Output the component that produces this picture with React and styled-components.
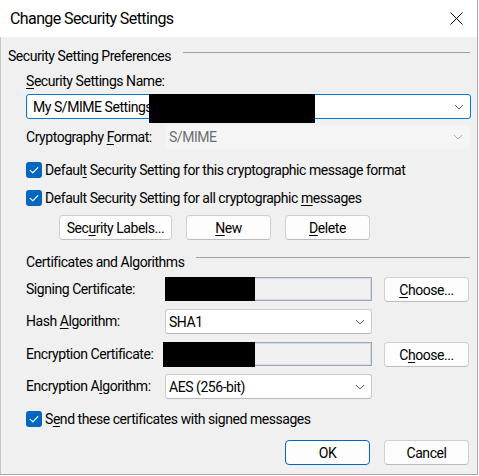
import React from 'react';
import styled, { createGlobalStyle } from 'styled-components';

const GlobalStyle = createGlobalStyle`
  html, body { margin: 0; padding: 0; background: #ffffff; }
  body { font-family: Roboto, "Noto Sans", sans-serif; font-size: 14px; letter-spacing: -0.45px; color: #000; }
  * { box-sizing: border-box; }
`;

const Window = styled.div`
  width: 478px;
  height: 475px;
  display: flex;
  flex-direction: column;
  background: #f0f0f0;
  border-right: 1px solid #a8a8a8;
  border-bottom: 1px solid #a8a8a8;
`;

const TitleBar = styled.div`
  height: 37px;
  flex: none;
  background: #ffffff;
  display: flex;
  align-items: center;
  justify-content: space-between;
  padding: 0 14px 0 10px;
  font-size: 16px;
  letter-spacing: -0.6px;
`;

const CloseButton = styled.div`
  width: 14px;
  height: 14px;
  display: flex;
  align-items: center;
  justify-content: center;
`;

const Body = styled.div`
  flex: 1;
  border-left: 1px solid #c4c4c4;
  padding: 9px 6px 0 7px;
  display: flex;
  flex-direction: column;
`;

const GroupHeader = styled.div`
  display: flex;
  height: 20px;
  align-items: center;
  padding-left: ${(p) => p.$indent || 0}px;
  margin-top: ${(p) => p.$mt || 0}px;
`;

const GroupLine = styled.div`
  flex: 1;
  align-self: flex-start;
  height: 1px;
  background: #a0a0a0;
  margin-top: ${(p) => p.$lineTop}px;
  margin-left: 12px;
  margin-right: 1px;
`;

const Indent = styled.div`
  padding-left: 18px;
  display: flex;
  flex-direction: column;
`;

const Label = styled.div`
  height: 20px;
  line-height: 20px;
  white-space: nowrap;
  margin-top: ${(p) => p.$mt || 0}px;
`;

const Combo = styled.div`
  position: relative;
  height: ${(p) => p.$h || 25}px;
  width: ${(p) => (p.$w ? `${p.$w}px` : 'auto')};
  margin-top: ${(p) => p.$mt || 0}px;
  display: flex;
  align-items: center;
  justify-content: space-between;
  padding: 0 6px 0 ${(p) => p.$pl || 3}px;
  background: ${(p) => (p.$disabled ? '#f5f5f5' : '#ffffff')};
  border: 1px solid ${(p) => (p.$focus ? '#0078d4' : p.$disabled ? '#f3f3f3' : '#cccccc')};
  border-bottom-color: ${(p) => (p.$focus ? '#0078d4' : p.$disabled ? '#f3f3f3' : '#b8b8b8')};
  border-radius: 3px;
  color: ${(p) => (p.$disabled ? '#6d6d6d' : '#000')};
  white-space: nowrap;
`;

const Redaction = styled.div`
  position: absolute;
  background: #000;
  left: ${(p) => p.$l}px;
  top: ${(p) => p.$t}px;
  width: ${(p) => p.$w}px;
  height: ${(p) => p.$h}px;
`;

const InlineRow = styled.div`
  display: flex;
  align-items: center;
  margin-top: ${(p) => p.$mt || 0}px;
`;

const InlineLabel = styled.div`
  width: 139px;
  flex: none;
  white-space: nowrap;
`;

const CheckRow = styled.div`
  display: flex;
  align-items: center;
  height: 20px;
  gap: 3px;
  margin-top: ${(p) => p.$mt || 0}px;
  white-space: nowrap;
`;

const CheckBox = styled.span`
  width: 16px;
  height: 16px;
  flex: none;
  border-radius: 3px;
  background: #0067c0;
  display: flex;
  align-items: center;
  justify-content: center;
`;

const ButtonRow = styled.div`
  display: flex;
  gap: 14px;
  margin-top: ${(p) => p.$mt || 0}px;
  padding-left: ${(p) => p.$pl || 0}px;
  padding-right: ${(p) => p.$pr || 0}px;
  justify-content: ${(p) => (p.$end ? 'flex-end' : 'flex-start')};
`;

const Button = styled.div`
  width: ${(p) => p.$w || 85}px;
  height: 25px;
  flex: none;
  display: flex;
  align-items: center;
  justify-content: center;
  background: #fdfdfd;
  border: 1px solid ${(p) => (p.$default ? '#0067c0' : '#d0d0d0')};
  border-bottom-color: ${(p) => (p.$default ? '#0067c0' : '#bcbcbc')};
  border-radius: 4px;
  white-space: nowrap;
`;

const FieldRows = styled.div`
  display: flex;
  flex-direction: column;
  gap: 7px;
  margin-top: 5px;
`;

const FieldRow = styled.div`
  display: grid;
  grid-template-columns: 139px 207px 97px;
  align-items: start;
  height: 25px;
  margin-top: ${(p) => p.$mt || 0}px;
`;

const RowLabel = styled.div`
  height: 25px;
  line-height: 25px;
  white-space: nowrap;
`;

const CertField = styled.div`
  position: relative;
  height: 24px;
  border: 1px solid #a6a6a6;
  background: #f0f0f0;
  box-shadow: inset 0 0 0 1px #c9dcf2;
`;

const RightButton = styled(Button)`
  justify-self: end;
`;

const Acc = styled.u`
  text-decoration-thickness: 1px;
  text-underline-offset: 2px;
`;

const Chevron = ({ color = '#5f5f5f' }) => (
  <svg width="10" height="6" viewBox="0 0 10 6">
    <path d="M1 1 L5 5 L9 1" fill="none" stroke={color} strokeWidth="1" />
  </svg>
);

const Check = () => (
  <svg width="12" height="12" viewBox="0 0 12 12">
    <path d="M2.2 6.4 L4.8 8.8 L9.8 3.6" fill="none" stroke="#ffffff" strokeWidth="1.2" strokeLinecap="round" strokeLinejoin="round" />
  </svg>
);

const CloseIcon = () => (
  <svg width="13" height="13" viewBox="0 0 13 13">
    <path d="M0.5 0.5 L12.5 12.5 M12.5 0.5 L0.5 12.5" fill="none" stroke="#000" strokeWidth="1" />
  </svg>
);

export default function App() {
  return (
    <>
      <GlobalStyle />
      <Window>
        <TitleBar>
          <span>Change Security Settings</span>
          <CloseButton>
            <CloseIcon />
          </CloseButton>
        </TitleBar>
        <Body>
          <GroupHeader>
            <span>Security Setting Preferences</span>
            <GroupLine $lineTop={6} />
          </GroupHeader>
          <Indent>
            <Label $mt={5}>
              <Acc>S</Acc>ecurity Settings Name:
            </Label>
            <Combo $focus $mt={3} $pl={6}>
              <span>My S/MIME Settings</span>
              <Chevron />
              <Redaction $l={122} $t={-1} $w={166} $h={29} />
            </Combo>
            <InlineRow $mt={6}>
              <InlineLabel>
                Cryptography <Acc>F</Acc>ormat:
              </InlineLabel>
              <Combo $disabled $w={305} $h={24}>
                <span>S/MIME</span>
                <Chevron color="#b4b4b4" />
              </Combo>
            </InlineRow>
            <CheckRow $mt={11}>
              <CheckBox>
                <Check />
              </CheckBox>
              <span>
                Defaul<Acc>t</Acc> Security Setting for this cryptographic message format
              </span>
            </CheckRow>
            <CheckRow $mt={8}>
              <CheckBox>
                <Check />
              </CheckBox>
              <span>
                Default Security Setting for all cryptographic <Acc>m</Acc>essages
              </span>
            </CheckRow>
            <ButtonRow $mt={7} $pl={33}>
              <Button $w={113}>
                Sec<Acc>u</Acc>rity Labels...
              </Button>
              <Button>
                <Acc>N</Acc>ew
              </Button>
              <Button>
                <Acc>D</Acc>elete
              </Button>
            </ButtonRow>
          </Indent>
          <GroupHeader $indent={18} $mt={12}>
            <span>Certificates and Algorithms</span>
            <GroupLine $lineTop={5} />
          </GroupHeader>
          <Indent>
            <FieldRows>
              <FieldRow>
                <RowLabel>Signing Certificate:</RowLabel>
                <CertField>
                  <Redaction $l={-1} $t={-1} $w={90} $h={24} />
                </CertField>
                <RightButton>
                  <Acc>C</Acc>hoose...
                </RightButton>
              </FieldRow>
              <FieldRow>
                <RowLabel>
                  Hash <Acc>A</Acc>lgorithm:
                </RowLabel>
                <Combo>
                  <span>SHA1</span>
                  <Chevron />
                </Combo>
              </FieldRow>
              <FieldRow $mt={1}>
                <RowLabel>Encryption Certificate:</RowLabel>
                <CertField>
                  <Redaction $l={-3} $t={-1} $w={92} $h={25} />
                </CertField>
                <RightButton>
                  C<Acc>h</Acc>oose...
                </RightButton>
              </FieldRow>
              <FieldRow>
                <RowLabel>
                  Encryption A<Acc>l</Acc>gorithm:
                </RowLabel>
                <Combo>
                  <span>AES (256-bit)</span>
                  <Chevron />
                </Combo>
              </FieldRow>
            </FieldRows>
            <CheckRow $mt={10}>
              <CheckBox>
                <Check />
              </CheckBox>
              <span>
                S<Acc>e</Acc>nd these certificates with signed messages
              </span>
            </CheckRow>
          </Indent>
          <ButtonRow $end $mt={11} $pr={2}>
            <Button $default>OK</Button>
            <Button>Cancel</Button>
          </ButtonRow>
        </Body>
      </Window>
    </>
  );
}
